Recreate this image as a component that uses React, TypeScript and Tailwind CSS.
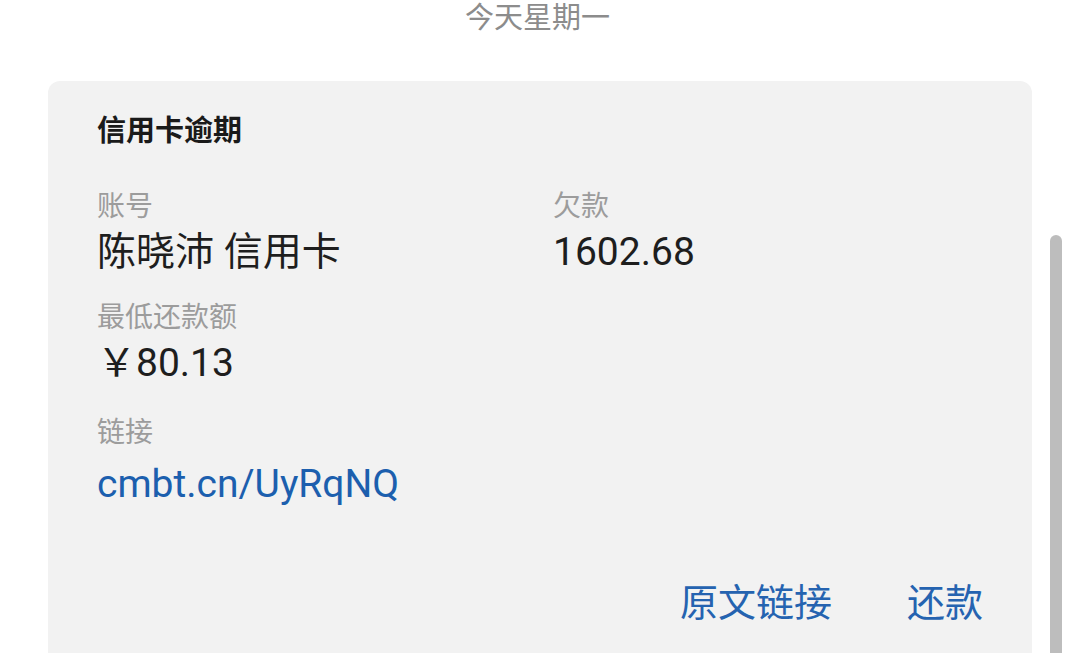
import React from 'react'

const font = { fontFamily: 'Roboto, "Noto Sans CJK SC", sans-serif' }

function Field({ label, value }: { label: string; value: string }) {
  return (
    <div>
      <div className="text-[28px] leading-[34px] text-[#9c9c9c]">{label}</div>
      <div className="text-[39px] leading-[44px] mt-[6px] text-[#1e1e1e]">{value}</div>
    </div>
  )
}

export default function App() {
  return (
    <div className="relative w-[1075px] h-[653px] overflow-hidden bg-white" style={font}>
      <div className="text-center text-[29px] leading-[36px] text-[#8c8c8c]">今天星期一</div>

      <div className="mx-[48px] mt-[45px] w-[984px] h-[620px] rounded-[12px] bg-[#f2f2f2] pl-[49px] pr-[49px] pt-[32px]">
        <h2 className="text-[29px] leading-[36px] font-semibold text-[#1a1a1a]">信用卡逾期</h2>

        <div className="grid grid-cols-[456px_1fr] mt-[41px]">
          <Field label="账号" value="陈晓沛 信用卡" />
          <Field label="欠款" value="1602.68" />
        </div>

        <div className="mt-[27px]">
          <Field label="最低还款额" value="￥80.13" />
        </div>

        <div className="mt-[31px]">
          <div className="text-[28px] leading-[34px] text-[#9c9c9c]">链接</div>
          <div className="text-[39px] leading-[44px] mt-[12px] text-[#1c5fae]">cmbt.cn/UyRqNQ</div>
        </div>

        <div className="flex justify-end gap-[75px] mt-[74px] text-[38px] leading-[46px] text-[#2563b0]">
          <button>原文链接</button>
          <button>还款</button>
        </div>
      </div>

      <div className="absolute left-[1050px] top-[235px] w-[12px] h-[440px] rounded-t-full bg-[#bdbdbd]" />
    </div>
  )
}
